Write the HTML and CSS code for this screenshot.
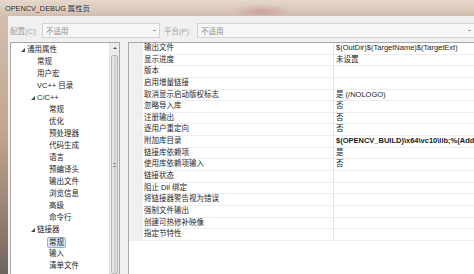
FILE: index.html
```html
<!DOCTYPE html>
<html lang="zh-CN">
<head>
    <meta charset="UTF-8">
    <title>OPENCV_DEBUG 属性页</title>
    <link rel="stylesheet" href="styles.css">
</head>
<body>
    <div class="window">
        <div class="titlebar">
            <span class="title">OPENCV_DEBUG 属性页</span>
        </div>
        <div class="frame">
            <div class="frame-left"></div>
            <div class="client">
                <!-- fila de configuracion / plataforma -->
                <div class="config-row">
                    <span class="cfg-label">配置(C):</span>
                    <div class="combo combo-config">
                        <span>不适用</span>
                        <span class="combo-arrow"></span>
                    </div>
                    <span class="cfg-label cfg-platform">平台(P):</span>
                    <div class="combo combo-platform">
                        <span>不适用</span>
                        <span class="combo-arrow"></span>
                    </div>
                </div>

                <div class="panels">
                    <!-- arbol de la izquierda -->
                    <div class="tree">
                        <ul class="tree-list">
                            <li class="lv0"><span class="exp"></span>通用属性</li>
                            <li class="lv1">常规</li>
                            <li class="lv1">用户宏</li>
                            <li class="lv1">VC++ 目录</li>
                            <li class="lv1"><span class="exp"></span>C/C++</li>
                            <li class="lv2">常规</li>
                            <li class="lv2">优化</li>
                            <li class="lv2">预处理器</li>
                            <li class="lv2">代码生成</li>
                            <li class="lv2">语言</li>
                            <li class="lv2">预编译头</li>
                            <li class="lv2">输出文件</li>
                            <li class="lv2">浏览信息</li>
                            <li class="lv2">高级</li>
                            <li class="lv2">命令行</li>
                            <li class="lv1"><span class="exp"></span>链接器</li>
                            <li class="lv2 sel-row"><span class="selected">常规</span></li>
                            <li class="lv2">输入</li>
                            <li class="lv2">清单文件</li>
                        </ul>
                        <div class="scrollbar">
                            <div class="sb-up"><span class="sb-up-arrow"></span></div>
                            <div class="sb-gap"></div>
                            <div class="sb-thumb"><span class="sb-grip"></span></div>
                        </div>
                    </div>

                    <!-- tabla de propiedades -->
                    <div class="grid">
                        <div class="prop"><span class="gut"></span><span class="name">输出文件</span><span class="val">$(OutDir)$(TargetName)$(TargetExt)</span></div>
                        <div class="prop"><span class="gut"></span><span class="name">显示进度</span><span class="val">未设置</span></div>
                        <div class="prop"><span class="gut"></span><span class="name">版本</span><span class="val"></span></div>
                        <div class="prop"><span class="gut"></span><span class="name">启用增量链接</span><span class="val"></span></div>
                        <div class="prop"><span class="gut"></span><span class="name">取消显示启动版权标志</span><span class="val">是 (/NOLOGO)</span></div>
                        <div class="prop"><span class="gut"></span><span class="name">忽略导入库</span><span class="val">否</span></div>
                        <div class="prop"><span class="gut"></span><span class="name">注册输出</span><span class="val">否</span></div>
                        <div class="prop"><span class="gut"></span><span class="name">逐用户重定向</span><span class="val">否</span></div>
                        <div class="prop"><span class="gut"></span><span class="name">附加库目录</span><span class="val bold">$(OPENCV_BUILD)\x64\vc10\lib;%(AdditionalLibraryDirectories)</span></div>
                        <div class="prop"><span class="gut"></span><span class="name">链接库依赖项</span><span class="val">是</span></div>
                        <div class="prop"><span class="gut"></span><span class="name">使用库依赖项输入</span><span class="val">否</span></div>
                        <div class="prop"><span class="gut"></span><span class="name">链接状态</span><span class="val"></span></div>
                        <div class="prop"><span class="gut"></span><span class="name">阻止 Dll 绑定</span><span class="val"></span></div>
                        <div class="prop"><span class="gut"></span><span class="name">将链接器警告视为错误</span><span class="val"></span></div>
                        <div class="prop"><span class="gut"></span><span class="name">强制文件输出</span><span class="val"></span></div>
                        <div class="prop"><span class="gut"></span><span class="name">创建可热修补映像</span><span class="val"></span></div>
                        <div class="prop"><span class="gut"></span><span class="name">指定节特性</span><span class="val"></span></div>
                    </div>
                </div>
            </div>
        </div>
    </div>
</body>
</html>
```

FILE: styles.css
```css
body, html {
    margin: 0;
    padding: 0;
    width: 474px;
    height: 274px;
    overflow: hidden;
    font-family: "Liberation Sans", "Noto Sans CJK SC", sans-serif;
    font-size: 7.5px;
}
.window {
    display: flex;
    flex-direction: column;
    height: 274px;
    width: 474px;
    overflow: hidden;
}
/* Barra de titulo */
.titlebar {
    height: 15px;
    flex: none;
    display: flex;
    align-items: center;
    padding-left: 5px;
    background:
        radial-gradient(ellipse 30px 8px at 262px 12px, rgba(190, 120, 130, 0.45), rgba(190, 120, 130, 0)),
        linear-gradient(to bottom, #e6d8cc, #d4bfae);
}
.title {
    font-size: 7.3px;
    color: #1c1c1c;
    text-shadow: 0 0 3px rgba(255, 255, 255, 0.9);
}
.frame {
    flex: 1;
    display: flex;
    min-height: 0;
}
.frame-left {
    width: 8px;
    flex: none;
    background: linear-gradient(to bottom, #d2bfb0, #bfa690 45%, #9a8474 75%, #6e645e);
}
.client {
    flex: 1;
    min-width: 0;
    background-color: #f0f0f0;
    border-top: 1px solid #c9bdb3;
    padding-left: 2px;
    display: flex;
    flex-direction: column;
}
/* Configuracion */
.config-row {
    display: flex;
    align-items: center;
    height: 15px;
    margin-top: 7px;
    color: #a2a2a2;
}
.cfg-label {
    width: 32px;
    flex: none;
}
.cfg-platform {
    width: 33px;
    margin-left: 4px;
}
.combo {
    height: 15px;
    box-sizing: border-box;
    border: 1px solid #d3d3d3;
    background-color: #f6f6f6;
    display: flex;
    align-items: center;
    justify-content: space-between;
    padding: 0 3px;
    color: #8e8e8e;
}
.combo-config {
    width: 118px;
}
.combo-platform {
    flex: 1;
    margin-right: -6px;
    padding-right: 8px;
}
.combo-arrow {
    width: 3px;
    height: 1px;
    background-color: #9a9a9a;
}
.panels {
    flex: 1;
    display: flex;
    margin-top: 4px;
    min-height: 0;
}
/* Arbol */
.tree {
    width: 110px;
    flex: none;
    box-sizing: border-box;
    border: 1px solid #a5a8ad;
    border-bottom: none;
    background-color: white;
    display: flex;
    margin-right: 8px;
}
.tree-list {
    list-style: none;
    margin: 0;
    padding: 1px 0 0;
    flex: 1;
    color: #1b1b1b;
}
.tree-list li {
    height: 12px;
    line-height: 12px;
    display: flex;
    align-items: center;
    white-space: nowrap;
}
.lv0 { padding-left: 16px; }
.lv1 { padding-left: 26px; }
.lv2 { padding-left: 38px; }
.lv2.sel-row { padding-left: 36px; }
.exp {
    width: 0;
    height: 0;
    margin-left: -6px;
    margin-right: 2px;
    border-left: 4px solid transparent;
    border-bottom: 4px solid #474747;
}
.selected {
    line-height: 9px;
    padding: 0 1px;
    border: 1px solid #8fb2dc;
    border-radius: 2px;
    background: linear-gradient(to bottom, #eaf3fd, #d3e5fa);
}
/* Barra de desplazamiento */
.scrollbar {
    width: 9px;
    flex: none;
    display: flex;
    flex-direction: column;
    background-color: #ececec;
    border-left: 1px solid #e2e2e2;
}
.sb-up {
    height: 10px;
    display: flex;
    align-items: center;
    justify-content: center;
}
.sb-up-arrow {
    width: 0;
    height: 0;
    border-left: 2px solid transparent;
    border-right: 2px solid transparent;
    border-bottom: 2px solid #505050;
}
.sb-gap {
    height: 2px;
}
.sb-thumb {
    flex: 1;
    margin: 0 1px;
    border: 1px solid #b8b8b8;
    border-radius: 2px;
    background: linear-gradient(to right, #ededed, #dadada 45%, #cfcfcf 55%, #e3e3e3);
    display: flex;
    justify-content: center;
    padding-top: 107px;
}
.sb-grip {
    width: 3px;
    height: 4px;
    border-top: 1px solid #8a8a8a;
    border-bottom: 1px solid #8a8a8a;
    box-sizing: border-box;
}
/* Tabla de propiedades */
.grid {
    flex: 1;
    margin-right: -10px;
    border: 1px solid #a5a8ad;
    border-bottom: none;
    background-color: white;
    min-width: 0;
}
.prop {
    display: grid;
    grid-template-columns: 14px 190px 1fr;
    height: 11.65px;
    box-sizing: border-box;
    border-bottom: 1px solid #ededed;
    line-height: 10.65px;
    white-space: nowrap;
}
.gut {
    background-color: #f0f0f0;
}
.name {
    padding-left: 1px;
    color: #262626;
}
.val {
    border-left: 1px solid #e4e4e4;
    padding-left: 2px;
    color: #1a1a1a;
    overflow: hidden;
}
.val.bold {
    font-weight: bold;
}
```
